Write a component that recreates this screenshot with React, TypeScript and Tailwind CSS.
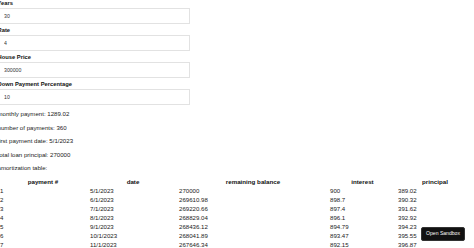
const fields = [
  { label: "Years", value: "30" },
  { label: "Rate", value: "4" },
  { label: "House Price", value: "300000" },
  { label: "Down Payment Percentage", value: "10" },
];

const summary = [
  "monthly payment: 1289.02",
  "number of payments: 360",
  "first payment date: 5/1/2023",
  "total loan principal: 270000",
  "amortization table:",
];

const rows = [
  ["1", "5/1/2023", "270000", "900", "389.02"],
  ["2", "6/1/2023", "269610.98", "898.7", "390.32"],
  ["3", "7/1/2023", "269220.66", "897.4", "391.62"],
  ["4", "8/1/2023", "268829.04", "896.1", "392.92"],
  ["5", "9/1/2023", "268436.12", "894.79", "394.23"],
  ["6", "10/1/2023", "268041.89", "893.47", "395.55"],
  ["7", "11/1/2023", "267646.34", "892.15", "396.87"],
  ["8", "12/1/2023", "267248.15", "890.83", "398.19"],
];

const cols = ["w-[91px]", "w-[89px]", "w-[151px]", "w-[68px]", "w-[77px]"];

export default function App() {
  return (
    <div className="h-[248px] w-[474px] overflow-hidden bg-white font-['Liberation_Sans',Arial,sans-serif] text-[#222]">
      <div className="ml-[-2.5px] mt-[-1px]">
        {fields.map((f) => (
          <div key={f.label} className="mb-[2px]">
            <label className="block h-[8px] text-[5.8px] leading-[8px] font-bold text-[#111]">{f.label}</label>
            <input
              type="number"
              defaultValue={f.value}
              className="mt-[1px] block h-[16px] w-[192.5px] border border-[#e2e2e2] pl-[5.5px] text-[5.2px] text-[#333] outline-none"
            />
          </div>
        ))}

        <div className="mt-[1px]">
          {summary.map((s) => (
            <p key={s} className="text-[6.1px] leading-[13.5px]">
              {s}
            </p>
          ))}
        </div>

        <table className="mt-[2.75px] table-fixed text-[6.1px]">
          <thead>
            <tr className="h-[9px]">
              {["payment #", "date", "remaining balance", "interest", "principal"].map((h, i) => (
                <th key={h} className={`${cols[i]} p-0 text-center text-[6.2px] leading-[9px] font-bold text-[#111]`}>
                  {h}
                </th>
              ))}
            </tr>
          </thead>
          <tbody>
            {rows.map((r) => (
              <tr key={r[0]} className="h-[9px]">
                {r.map((c, i) => (
                  <td key={i} className={`${i === 0 ? "pl-[2.5px]" : "pl-[1.5px]"} pr-[1px] py-0 text-left leading-[9px]`}>
                    {c}
                  </td>
                ))}
              </tr>
            ))}
          </tbody>
        </table>
      </div>

      <button className="fixed right-[9px] bottom-[7px] flex h-[14px] w-[44px] items-center justify-center rounded-[2px] border border-[#333] bg-[#111] text-[5.1px] text-white">
        Open Sandbox
      </button>
    </div>
  );
}
